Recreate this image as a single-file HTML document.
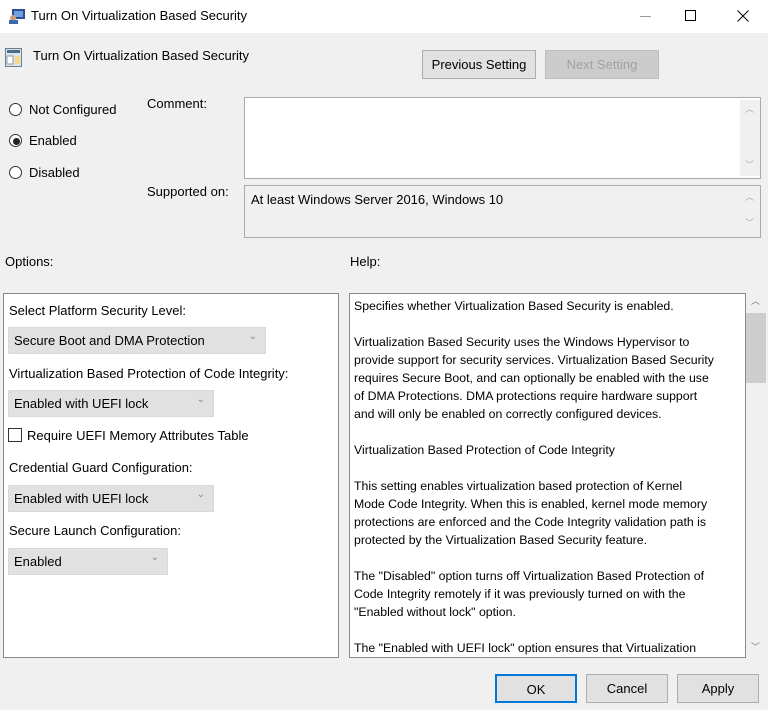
<!DOCTYPE html>
<html><head><style>
*{box-sizing:border-box;margin:0;padding:0}
body{width:768px;height:710px;background:#f0f0f0;font-family:"Liberation Sans",sans-serif;font-size:12.5px;color:#000;position:relative;overflow:hidden}
.a{position:absolute;white-space:nowrap}
.title{top:0;left:0;width:768px;height:33px;background:#fff}
.btn{position:absolute;border:1px solid #adadad;background:#e1e1e1;text-align:center;font-size:13px}
.dd{position:absolute;background:#e1e1e1;border:1px solid #d9d9d9;height:27px;line-height:25px;padding-left:5px;font-size:13px}
.dd:after{content:"⌄";position:absolute;right:8px;top:-4px;color:#888;font-size:10px}
.radio{position:absolute;width:13px;height:13px;border:1px solid #333;border-radius:50%;background:#fff}
.help div{margin-bottom:18px}
</style></head><body>
<div class="a title"></div>
<svg class="a" style="left:8px;top:8px" width="18" height="16"><rect x="4" y="1" width="13" height="10" fill="#2d4e8f"/><rect x="6" y="3" width="9" height="6" fill="#6fa0e0"/><circle cx="5" cy="10" r="3" fill="#caa27a"/><rect x="1" y="12" width="9" height="4" fill="#3a6ab0"/></svg>
<div class="a" style="left:31px;top:8px;font-size:13px">Turn On Virtualization Based Security</div>
<div class="a" style="left:640px;top:16px;width:11px;height:1px;background:#999"></div>
<div class="a" style="left:685px;top:10px;width:11px;height:11px;border:1px solid #000"></div>
<svg class="a" style="left:737px;top:10px" width="12" height="12"><path d="M0.5 0.5L11.5 11.5M11.5 0.5L0.5 11.5" stroke="#000" stroke-width="1"/></svg>
<svg class="a" style="left:5px;top:48px" width="18" height="20"><rect x="0.5" y="0.5" width="16" height="18" fill="#dde4ea" stroke="#6b7f8f"/><rect x="2" y="2" width="13" height="3" fill="#4a6b8a"/><rect x="2" y="8" width="6" height="8" fill="#fff" stroke="#8a9aa8"/><rect x="10" y="8" width="5" height="8" fill="#f3d98c"/></svg>
<div class="a" style="left:33px;top:48px;font-size:13px">Turn On Virtualization Based Security</div>
<div class="btn" style="left:422px;top:50px;width:114px;height:29px;line-height:27px">Previous Setting</div>
<div class="btn" style="left:545px;top:50px;width:114px;height:29px;line-height:27px;color:#a0a0a0;background:#cccccc;border-color:#bfbfbf">Next Setting</div>
<div class="radio" style="left:9px;top:103px"></div><div class="a" style="left:29px;top:102px;font-size:13px">Not Configured</div>
<div class="radio" style="left:9px;top:134px"></div><div class="a" style="left:13px;top:138px;width:7px;height:7px;border-radius:50%;background:#222"></div><div class="a" style="left:29px;top:133px;font-size:13px">Enabled</div>
<div class="radio" style="left:9px;top:166px"></div><div class="a" style="left:29px;top:165px;font-size:13px">Disabled</div>
<div class="a" style="left:147px;top:96px;font-size:13px">Comment:</div>
<div class="a" style="left:147px;top:184px;font-size:13px">Supported on:</div>
<div class="a" style="left:244px;top:97px;width:517px;height:82px;background:#fff;border:1px solid #aaa"><div class="a" style="right:0;top:2px;width:20px;height:76px;background:#f0f0f0"></div><div class="a" style="right:6px;top:4px;color:#aaa;font-size:9px">︿</div><div class="a" style="right:6px;top:60px;color:#aaa;font-size:9px">﹀</div></div>
<div class="a" style="left:244px;top:185px;width:517px;height:53px;background:#f0f0f0;border:1px solid #aaa"><div class="a" style="left:6px;top:6px;font-size:13px">At least Windows Server 2016, Windows 10</div><div class="a" style="right:6px;top:4px;color:#aaa;font-size:9px">︿</div><div class="a" style="right:6px;top:30px;color:#aaa;font-size:9px">﹀</div></div>
<div class="a" style="left:5px;top:254px;font-size:13px">Options:</div>
<div class="a" style="left:350px;top:254px;font-size:13px">Help:</div>
<div class="a" style="left:3px;top:293px;width:336px;height:365px;background:#fff;border:1px solid #888">
<div class="a" style="left:5px;top:9px;font-size:13px">Select Platform Security Level:</div>
<div class="dd" style="left:4px;top:33px;width:258px">Secure Boot and DMA Protection</div>
<div class="a" style="left:5px;top:72px;font-size:13px">Virtualization Based Protection of Code Integrity:</div>
<div class="dd" style="left:4px;top:96px;width:206px">Enabled with UEFI lock</div>
<div class="a" style="left:4px;top:134px;width:14px;height:14px;border:1px solid #333"></div>
<div class="a" style="left:23px;top:134px;font-size:13px">Require UEFI Memory Attributes Table</div>
<div class="a" style="left:5px;top:166px;font-size:13px">Credential Guard Configuration:</div>
<div class="dd" style="left:4px;top:191px;width:206px">Enabled with UEFI lock</div>
<div class="a" style="left:5px;top:229px;font-size:13px">Secure Launch Configuration:</div>
<div class="dd" style="left:4px;top:254px;width:160px">Enabled</div>
</div>
<div class="a help" style="left:349px;top:293px;width:397px;height:365px;background:#fff;border:1px solid #888;overflow:hidden;padding:3px 4px;line-height:18px;font-size:12.3px">
<div>Specifies whether Virtualization Based Security is enabled.</div>
<div>Virtualization Based Security uses the Windows Hypervisor to<br>provide support for security services. Virtualization Based Security<br>requires Secure Boot, and can optionally be enabled with the use<br>of DMA Protections. DMA protections require hardware support<br>and will only be enabled on correctly configured devices.</div>
<div>Virtualization Based Protection of Code Integrity</div>
<div>This setting enables virtualization based protection of Kernel<br>Mode Code Integrity. When this is enabled, kernel mode memory<br>protections are enforced and the Code Integrity validation path is<br>protected by the Virtualization Based Security feature.</div>
<div>The "Disabled" option turns off Virtualization Based Protection of<br>Code Integrity remotely if it was previously turned on with the<br>"Enabled without lock" option.</div>
<div>The "Enabled with UEFI lock" option ensures that Virtualization</div>
</div>
<div class="a" style="left:746px;top:313px;width:20px;height:70px;background:#cdcdcd"></div>
<div class="a" style="left:751px;top:294px;color:#777;font-size:9px">︿</div>
<div class="a" style="left:751px;top:640px;color:#777;font-size:9px">﹀</div>
<div class="btn" style="left:495px;top:674px;width:82px;height:29px;line-height:27px;border:2px solid #0078d7">OK</div>
<div class="btn" style="left:586px;top:674px;width:82px;height:29px;line-height:27px">Cancel</div>
<div class="btn" style="left:677px;top:674px;width:82px;height:29px;line-height:27px">Apply</div>
</body></html>
